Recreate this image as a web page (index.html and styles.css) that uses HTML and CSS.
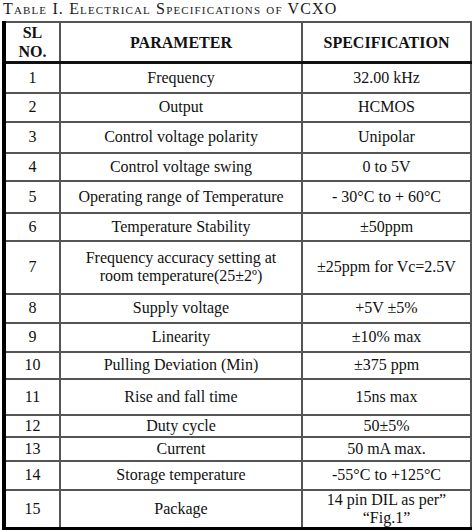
FILE: index.html
```html
<!DOCTYPE html>
<html>
<head>
<meta charset="utf-8">
<link rel="stylesheet" href="styles.css">
</head>
<body>
<div class="caption">Table I. Electrical Specifications of VCXO</div>
<table class="spec">
  <colgroup><col class="c1"><col class="c2"><col class="c3"></colgroup>
  <thead>
    <tr class="h40"><th>SL<br>NO.</th><th>PARAMETER</th><th>SPECIFICATION</th></tr>
  </thead>
  <tbody>
    <tr class="h30"><td>1</td><td>Frequency</td><td>32.00 kHz</td></tr>
    <tr class="h29"><td>2</td><td>Output</td><td>HCMOS</td></tr>
    <tr class="h31"><td>3</td><td>Control voltage polarity</td><td>Unipolar</td></tr>
    <tr class="h28"><td>4</td><td>Control voltage swing</td><td>0 to 5V</td></tr>
    <tr class="h32"><td>5</td><td>Operating range of Temperature</td><td>- 30°C to + 60°C</td></tr>
    <tr class="h28"><td>6</td><td>Temperature Stability</td><td>±50ppm</td></tr>
    <tr class="h53"><td>7</td><td>Frequency accuracy setting at<br>room temperature(25±2º)</td><td>±25ppm for Vc=2.5V</td></tr>
    <tr class="h29"><td>8</td><td>Supply voltage</td><td>+5V ±5%</td></tr>
    <tr class="h29"><td>9</td><td>Linearity</td><td>±10% max</td></tr>
    <tr class="h27"><td>10</td><td>Pulling Deviation (Min)</td><td>±375 ppm</td></tr>
    <tr class="h36"><td>11</td><td>Rise and fall time</td><td>15ns max</td></tr>
    <tr class="h22"><td>12</td><td>Duty cycle</td><td>50±5%</td></tr>
    <tr class="h24"><td>13</td><td>Current</td><td>50 mA max.</td></tr>
    <tr class="h29"><td>14</td><td>Storage temperature</td><td>-55°C to +125°C</td></tr>
    <tr class="h39"><td>15</td><td>Package</td><td>14 pin DIL as per”<br>“Fig.1”</td></tr>
  </tbody>
</table>
</body>
</html>
```
FILE: styles.css
```css
html, body {
  margin: 0;
  padding: 0;
  background: #fff;
}
body {
  font-family: "Liberation Serif", "Times New Roman", serif;
  color: #111;
}
.caption {
  height: 21px;
  padding-left: 3px;
  font-size: 16px;
  line-height: 17px;
  font-variant: small-caps;
  letter-spacing: 1.15px;
  white-space: nowrap;
  color: #1a1a1a;
}
.spec {
  margin-left: 2px;
  border-collapse: collapse;
  table-layout: fixed;
  width: 469px;
  border-left: 4px solid #000;
  border-top: 2px solid #000;
  border-right: 2px solid #111;
  border-bottom: 3px solid #000;
}
.c1 { width: 56px; }
.c2 { width: 242px; }
.c3 { width: 169px; }
.spec th, .spec td {
  padding: 0;
  text-align: center;
  vertical-align: middle;
  font-size: 16px;
  line-height: 18px;
  border: 2px solid #555;
  white-space: nowrap;
}
.spec th {
  font-weight: bold;
  line-height: 19px;
  border-bottom: 3px solid #111;
}
.h22 { height: 22px; }
.h24 { height: 24px; }
.h27 { height: 27px; }
.h28 { height: 28px; }
.h29 { height: 29px; }
.h30 { height: 30px; }
.h31 { height: 31px; }
.h32 { height: 32px; }
.h36 { height: 36px; }
.h39 { height: 39px; }
.h40 { height: 40px; }
.h53 { height: 53px; }
```
